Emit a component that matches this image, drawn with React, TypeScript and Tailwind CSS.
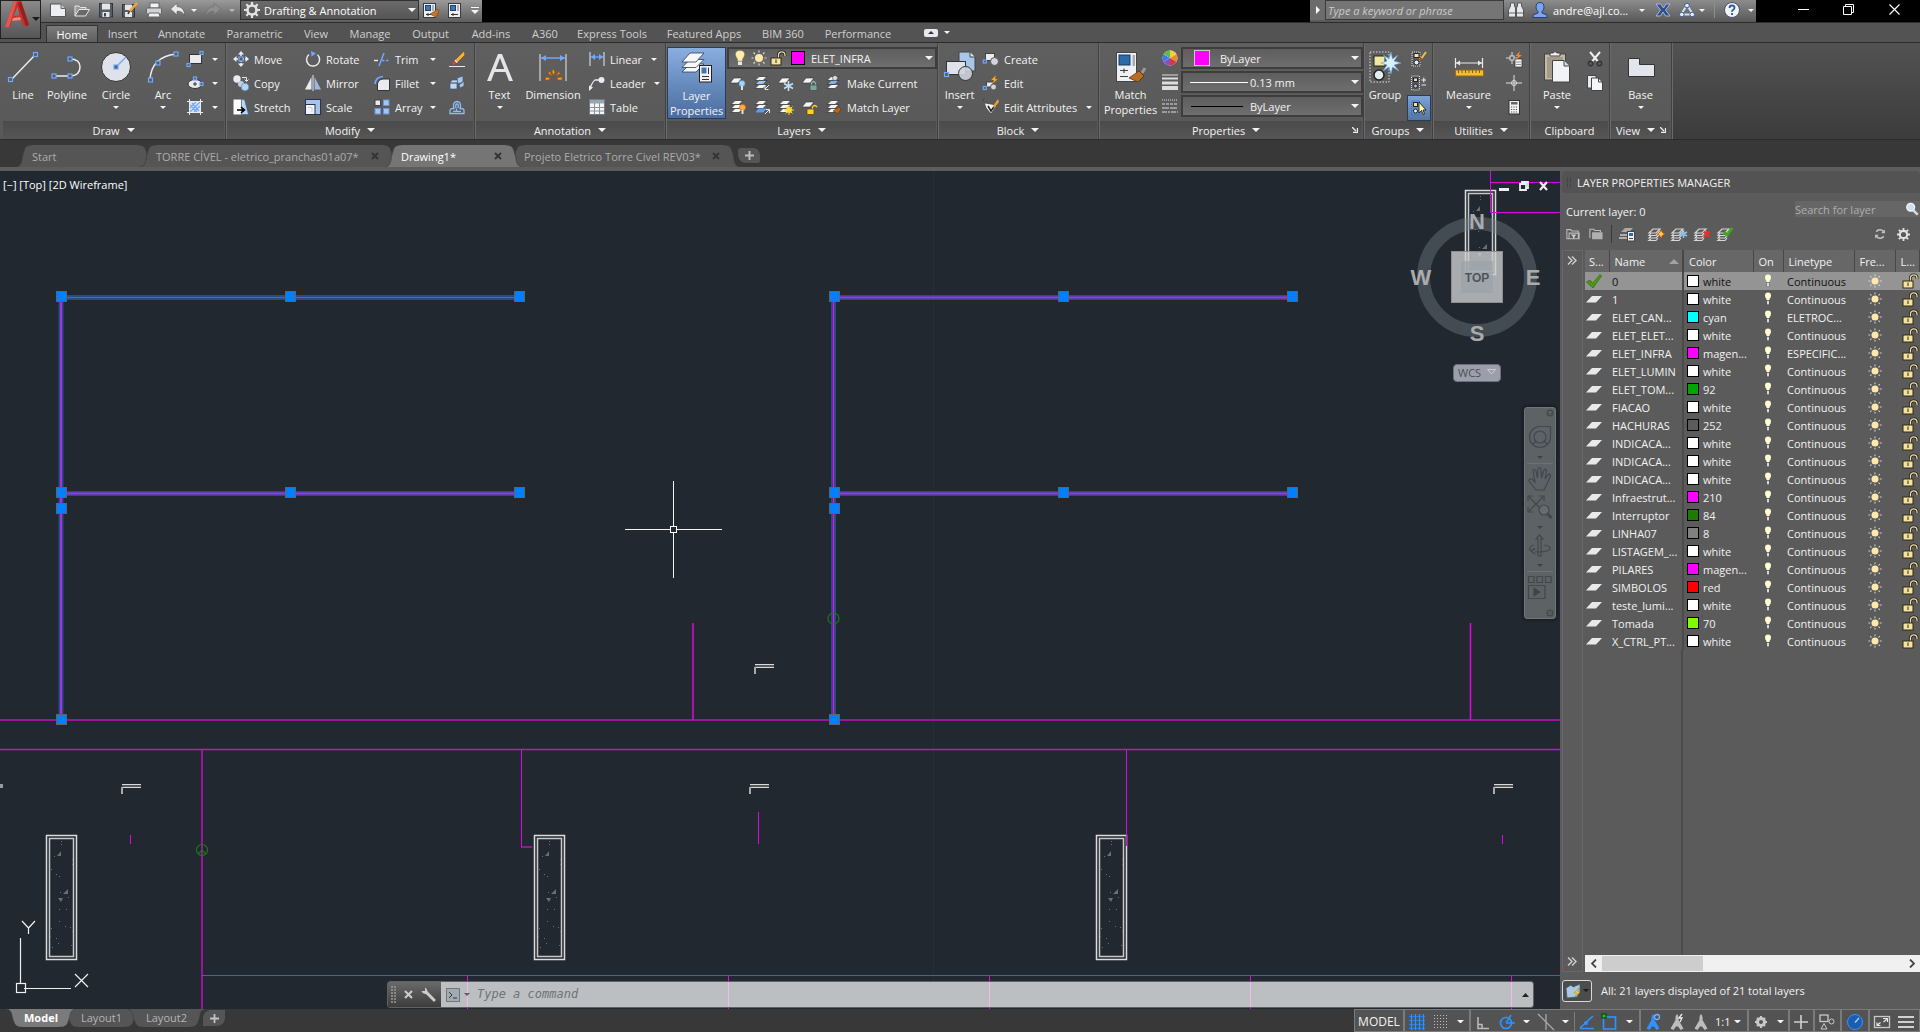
import React from "react";

type IconProps = { name: string; size?: number };

const B = "#6ea8ff";
const L = "#e9ebf0";

const Grip = ({ x, y, s = 3 }: { x: number; y: number; s?: number }) => (
  <rect x={x - s / 2} y={y - s / 2} width={s} height={s} fill="#5b5b5b" stroke={B} strokeWidth="1.2" />
);

const Sheets = ({ fill = "#f4f4f4", mid = "#f4f4f4" }: { fill?: string; mid?: string }) => (
  <g stroke="#2e2e2e" strokeWidth="0.7">
    <path d="M1 13.500 L5 9.500 H13 L9 13.500 Z" fill={fill} />
    <path d="M1 9.500 L5 5.500 H13 L9 9.500 Z" fill={mid} />
    <path d="M1 5.500 L5 1.500 H13 L9 5.500 Z" fill={fill} />
  </g>
);

const OneSheet = () => <path d="M0 8 L4 3 H12 L8 8 Z" fill="#f4f4f4" stroke="#2e2e2e" strokeWidth="0.6" />;

const OutlineSheets = ({ c = "#d8d8d8" }: { c?: string }) => (
  <g stroke={c} strokeWidth="1.2" fill="none">
    <path d="M1 7 L5 3 H12 L8 7 Z" />
    <path d="M3 7 L1 9.500 H8 L12 5" />
    <path d="M3 10 L1 12 H8 L11 9" />
    <path d="M3 13 L1 14.500 H8 L10 12" />
  </g>
);

const Doc = ({ x = 0 }: { x?: number }) => (
  <g>
    <rect x={x + 1.500} y="1.500" width="12" height="14" fill="#eef0f4" stroke="#3a3a3a" />
    <rect x={x + 3.500} y="3.500" width="5" height="5" fill="#3f76b5" stroke="#1e4170" />
    <rect x={x + 10} y="3" width="2" height="6" fill="#a9b2bd" />
    <path d={`M${x + 4} 12.500 H${x + 11} M${x + 6} 11 V14`} stroke="#333" fill="none" />
  </g>
);

const icons16: Record<string, React.ReactNode> = {
  rect: (<><rect x="2.500" y="3.500" width="12" height="9" fill={L} stroke="#333" /><Grip x={1.500} y={14} /><Grip x={14.500} y={2} /></>),
  ellipse: (<><ellipse cx="8" cy="9" rx="7" ry="4.500" fill={L} stroke="#333" /><path d="M6 9 H10 M8 7 V11" stroke="#333" /><Grip x={8} y={3.500} /><Grip x={14.500} y={9} /></>),
  hatch: (<><rect x="3" y="3" width="10" height="10" fill="#dfe6f2" /><path d="M3 9 L9 3 M3 13 L13 3 M7 13 L13 7 M5 4 L12 12 M3 6 L10 13" stroke={B} strokeWidth="1.200" /><path d="M2.500 0 V16 M13.500 0 V16 M0 2.500 H16 M0 13.500 H16" stroke={L} /></>),
  move: (<><path d="M8 0 L11 3.500 H5 Z M8 16 L11 12.500 H5 Z M0 8 L3.500 5 V11 Z M16 8 L12.500 5 V11 Z" fill={L} /><path d="M8 3 V13 M3 8 H13" stroke={L} strokeWidth="1.500" strokeDasharray="2 1" /><Grip x={8} y={8} s={4} /></>),
  copy: (<><circle cx="4" cy="4" r="3.700" fill={L} /><circle cx="8" cy="9" r="3" fill="#b9d2ef" /><circle cx="12" cy="12" r="3.800" fill="#b9d2ef" stroke="#5b86b8" strokeWidth="0.700" /><path d="M9 2.500 H13.500 V6 M11.500 4.500 L13.500 6.500 L15.500 4.500" stroke={L} fill="none" /></>),
  stretch: (<><rect x="0.500" y="0.500" width="8" height="15" fill="#fff" /><path d="M8.500 0.500 H11.500 L15.500 15.500 H8.500 Z" fill="#b8d6f0" stroke="#35608f" strokeWidth="0.600" /><path d="M4 11 H11 M8 8 L11.500 11 L8 14" stroke="#000" strokeWidth="1.600" fill="none" /></>),
  rotate: (<><path d="M4 3.500 A6.500 6.500 0 1 0 12.500 3.800" stroke={L} strokeWidth="1.500" fill="none" /><path d="M6 0 L11 2.500 L6.500 5.500 Z" fill={B} /></>),
  mirror: (<><path d="M6.500 2 V14.500 H0 Z" fill={L} /><path d="M9.500 2 V14.500 H16 Z" fill="#9ab9dc" /><path d="M8 0 V16" stroke={L} /></>),
  scale: (<><rect x="0.500" y="0.500" width="15" height="15" fill="#a8c2ea" stroke="#26354f" /><rect x="0.500" y="5.500" width="9.500" height="10" fill="#f3f4f8" stroke="#26354f" /><path d="M3 8.500 H7 V13" stroke="#ccc" fill="none" /></>),
  trim: (<><path d="M0 9.500 H4" stroke={L} strokeWidth="1.400" /><path d="M5 15 L10 2" stroke={B} strokeWidth="1.500" /><path d="M8 9.500 H16" stroke={B} strokeWidth="1.400" strokeDasharray="2.500 1.500" /></>),
  fillet: (<><path d="M3.500 15.500 V9 Q4 4.500 9 4 H15.500 V15.500 Z" fill={L} stroke="#333" /><path d="M1 9 Q1.500 2 9 1.500" stroke={B} strokeWidth="1.600" fill="none" /></>),
  array: (<><rect x="1" y="1" width="5.500" height="5.500" fill="#e9ebf0" stroke="#444" /><g fill="#a9c4f2" stroke="#6b95d8"><rect x="9.500" y="1" width="5.500" height="5.500" /><rect x="1" y="9.500" width="5.500" height="5.500" /><rect x="9.500" y="9.500" width="5.500" height="5.500" /></g></>),
  erase: (<><path d="M0 15.500 H16" stroke={L} /><path d="M15 0 L16 4 L9 11 L6.500 8.500 Z" fill="#f0b23a" stroke="#6e4410" strokeWidth="0.600" /><path d="M6.500 8.500 L9 11 L7.500 12 L5.500 10 Z" fill="#eee" /><path d="M5.500 10 L7.500 12 L5 14 Q2.500 13.500 3.500 11 Z" fill="#d8472b" /></>),
  explode: (<><path d="M1 8 H8 V14 H1 Z M3 5 H10 L8 8 H1 Z" fill="#c3d7ef" stroke="#3c5878" strokeWidth="0.700" /><path d="M8 3 L14 1 V7 L9 9 Z M10 10 L15 6 V11 L11 13 Z" fill="#a9c8ea" stroke="#3c5878" strokeWidth="0.700" /></>),
  offset: (<path d="M1 14.500 H15 V11.500 Q15 9.500 12 9.500 H11 Q13 3 8 2.500 Q3 3 5 9.500 H4 Q1 9.500 1 11.500 Z M4 12.300 H12 M7.500 9.500 V12 M7 9 Q6 5 8 5 Q10 5 9 9" stroke="#8fbaf5" strokeWidth="1.300" fill="none" />),
  linear: (<><path d="M1 1 V15 M15 1 V15" stroke={L} /><path d="M2 6 H14" stroke={B} strokeWidth="1.300" /><path d="M2 6 L6 3 V9 Z M14 6 L10 3 V9 Z" fill={B} /></>),
  leader: (<><path d="M1 13 Q4 6 6 5 H10" stroke={L} strokeWidth="1.300" fill="none" /><path d="M0 16 L0 10.500 L4 12.500 Z" fill={L} /><circle cx="12.500" cy="5" r="3" fill={L} /></>),
  table: (<><rect x="0.500" y="0.500" width="15" height="15" fill="#f6f6f6" stroke="#6e7a88" /><rect x="1" y="1" width="14" height="3.500" fill="#9aa5b4" /><path d="M1 8.500 H15 M1 12 H15 M5.500 4 V15 M10.500 4 V15" stroke="#8a8f98" /></>),
  layoff: (<><OneSheet /><circle cx="12" cy="8.500" r="3" fill="#a7d3f7" stroke="#5590c4" strokeWidth="0.600" /><rect x="11" y="11" width="2" height="4" fill="#ddd" /></>),
  layiso: (<><Sheets mid="#9cc6f0" /><path d="M15 10 L11 14 M11 11 V14.500 H14.500" stroke="#d8e6f5" fill="none" /></>),
  layfrz: (<><OneSheet /><g stroke="#bfe0fa" strokeWidth="1.600"><path d="M10.500 6 V16 M6 8.500 L15 13.500 M6 13.500 L15 8.500" /></g></>),
  laylck: (<><OneSheet /><path d="M9.500 10 V8 Q11.500 5 13.500 8 V10" fill="none" stroke="#8fb3ac" strokeWidth="1.300" /><rect x="8" y="10" width="7" height="5.500" fill="#7fa29c" stroke="#38504b" strokeWidth="0.700" /></>),
  makecur: (<><Sheets mid="#7fb2ea" /><circle cx="9" cy="3" r="2.500" fill="#ddd" stroke="#444" strokeWidth="0.600" /></>),
  layon: (<><Sheets /><circle cx="12.500" cy="8.500" r="3" fill="#ffb14a" stroke="#d46f10" strokeWidth="0.800" /><rect x="11.500" y="11" width="2" height="4" fill="#ddd" /></>),
  layuniso: (<><Sheets /><path d="M1 13.500 L5 9.500 H13 L9 13.500 Z" fill="#5c9af0" /><path d="M11 15 L15 11 M12 10.500 H15.500 V14" stroke="#e6e6e6" fill="none" /></>),
  laythw: (<><Sheets /><circle cx="11" cy="11" r="3" fill="#ffd83a" /><path d="M11 6 V16 M6 11 H16 M7.500 7.500 L14.500 14.500 M14.500 7.500 L7.500 14.500" stroke="#ffd83a" /></>),
  layulk: (<><OneSheet /><path d="M10.500 11 V8 Q12.500 5 15 8" fill="none" stroke="#ffce2e" strokeWidth="1.300" /><rect x="5" y="10" width="7" height="5.500" fill="#ffce2e" stroke="#54420a" strokeWidth="0.700" /></>),
  match: (<><Sheets /><path d="M13 8 L15 10 L12 15 L7 12 Z" fill="#b8651f" stroke="#5c2f08" strokeWidth="0.600" /></>),
  create: (<><rect x="2.500" y="2.500" width="9" height="7" fill={L} stroke="#444" /><circle cx="11.500" cy="10.500" r="4" fill="#cfd5de" stroke="#555" /><Grip x={1.800} y={10.500} /></>),
  editblk: (<><rect x="3.500" y="7" width="7" height="5" fill={L} stroke="#444" /><circle cx="10.500" cy="12" r="3" fill="#cfd5de" stroke="#555" /><Grip x={1.800} y={13} /><path d="M13 0 L8 5 H11 L9 9 L15 4 H12 Z" fill="#ffb52b" stroke="#9a5a00" strokeWidth="0.400" /></>),
  attr: (<><path d="M0 0 L2 4 L14 6 L8 15 L3 9 Z" fill="#f1f1f1" stroke="#444" strokeWidth="0.800" /><path d="M5 7 L8 12 L15 2" stroke="#222" strokeWidth="1.500" fill="none" /><path d="M15 0 L16 3 L11 9 L10 7 Z" fill="#f0a031" /></>),
  wheel: (<><circle cx="8" cy="8" r="7.500" fill="#fff" /><path d="M8 8 L8 0.500 A7.500 7.500 0 0 1 14.500 4.200 Z" fill="#f1d13b" /><path d="M8 8 L14.500 4.200 A7.500 7.500 0 0 1 14.500 11.800 Z" fill="#e98a34" /><path d="M8 8 L14.500 11.800 A7.500 7.500 0 0 1 8 15.500 Z" fill="#d33b3b" /><path d="M8 8 V15.500 A7.500 7.500 0 0 1 1.500 11.800 Z" fill="#8a4bd0" /><path d="M8 8 L1.500 11.800 A7.500 7.500 0 0 1 1.500 4.200 Z" fill="#3f7be0" /><path d="M8 8 L1.500 4.200 A7.500 7.500 0 0 1 8 0.500 Z" fill="#5ebd4a" /></>),
  gedit: (<><rect x="1" y="1" width="8" height="14" fill="none" stroke="#ddd" strokeDasharray="1 1" /><rect x="3" y="2.500" width="5" height="4" fill="#efe9a0" stroke="#222" /><circle cx="5.500" cy="11.500" r="2.500" fill="#e6f0f2" stroke="#222" /><path d="M15 1 L10 8" stroke="#f0c040" strokeWidth="2" /><path d="M10.500 7 L9 9.500" stroke="#c0392b" strokeWidth="2" /></>),
  gadd: (<><rect x="0.500" y="1" width="8" height="14" fill="none" stroke="#ddd" strokeDasharray="1 1" /><rect x="2.500" y="3" width="4" height="3.500" fill="#ddd" stroke="#222" /><circle cx="4.500" cy="11" r="2" fill="#9cc6f0" stroke="#222" /><path d="M10.500 5 H15 M12.800 2.500 V7.500 M10.500 10 H15" stroke="#eee" /></>),
  gsel: (<><rect x="0.500" y="1" width="8" height="14" fill="none" stroke="#2d6ae0" strokeDasharray="1 1" /><rect x="2.500" y="2.500" width="4" height="4" fill="#efe9a0" stroke="#222" /><circle cx="4.500" cy="11" r="2" fill="#e6f0f2" stroke="#222" /><path d="M8 2 V13 L10.500 10.500 L12 14.500 L13.500 14 L12 10 H15 Z" fill="#fff6a8" stroke="#111" strokeWidth="0.800" /></>),
  qcalcpt: (<><path d="M0 7 H12 M6 1 V13" stroke="#ddd" /><rect x="4" y="5" width="4" height="4" fill="#5b5b5b" stroke="#ddd" /><path d="M14 0 L9.500 5 H12 L10 9 L16 4 H13 Z" fill="#f3892b" /><rect x="9" y="8" width="7" height="8" fill="#f2f2f2" stroke="#333" strokeWidth="0.700" /><path d="M10.500 11 H15 M10.500 13.500 H15" stroke="#333" strokeDasharray="1 1" /></>),
  point: (<><path d="M0 8 H16 M8 0 V16" stroke="#ddd" /><circle cx="8" cy="8" r="2.500" fill="none" stroke="#ddd" /></>),
  calc: (<><rect x="3" y="1.500" width="10.500" height="13.500" fill="#f2f2f2" stroke="#333" /><rect x="5" y="3" width="6.500" height="2.500" fill="#666" /><path d="M5 8 H12 M5 10.500 H12 M5 13 H12" stroke="#555" strokeWidth="1.200" strokeDasharray="1.200 1.200" /></>),
  cut: (<><path d="M3 1 L11 10.500 M13 1 L5 10.500" stroke="#eee" strokeWidth="2" /><circle cx="3.500" cy="12.500" r="2.200" fill="none" stroke="#333" strokeWidth="1.400" /><circle cx="12.500" cy="12.500" r="2.200" fill="none" stroke="#333" strokeWidth="1.400" /></>),
  copyclip: (<><path d="M0.500 0.500 H9 V13 H0.500 Z" fill="#e9ebf0" stroke="#444" /><path d="M4.500 3 H11.500 L15.500 7 V15.500 H4.500 Z" fill="#f5f6f8" stroke="#444" /><path d="M11.500 3 V7 H15.500" fill="none" stroke="#444" /></>),
  new: (<><path d="M0.500 2 H11 L15.500 6.500 V14.500 H0.500 Z" fill="#eceef2" stroke="#555" /><path d="M11 2 V6.500 H15.500" fill="#ccc" stroke="#666" /></>),
  open: (<><path d="M1 14 V4 H5 L6.500 5.500 H12 V8" fill="#9a9a9a" stroke="#e6e6e6" /><path d="M1 14 L5 7.500 H15.500 L11.500 14 Z" fill="#6a6a6a" stroke="#e6e6e6" /></>),
  save: (<><rect x="1.500" y="1.500" width="13" height="13.500" fill="#575c64" stroke="#33373d" /><rect x="4" y="1.500" width="8" height="6" fill="#e3e5e9" /><rect x="4.500" y="10" width="7" height="5" fill="#e3e5e9" /><rect x="6" y="11" width="2" height="3.500" fill="#444" /></>),
  saveas: (<><rect x="0.500" y="2.500" width="12" height="12.500" fill="#575c64" stroke="#33373d" /><rect x="3" y="2.500" width="7" height="5.500" fill="#e3e5e9" /><rect x="3" y="10" width="7" height="5" fill="#e3e5e9" /><path d="M15 1 L7 10" stroke="#f0a838" strokeWidth="2.600" /><path d="M7.500 9 L6 12" stroke="#333" strokeWidth="1.500" /></>),
  print: (<><rect x="4" y="1" width="9" height="5" fill="#f2f2f2" stroke="#666" /><rect x="0.500" y="6" width="15" height="6" rx="1" fill="#cfd2d7" stroke="#666" /><path d="M3 11 H13 L14 15 H2 Z" fill="#f2f2f2" stroke="#666" /></>),
  undo: (<path d="M0.500 7 L7 1 V4.500 Q15 5 14.500 14 Q13 9 7 9.300 V13 Z" fill="#e6e8ec" stroke="#555" strokeWidth="0.600" />),
  redo: (<path d="M15.500 7 L9 1 V4.500 Q1 5 1.500 14 Q3 9 9 9.300 V13 Z" fill="#8f8f8f" stroke="#6d6d6d" strokeWidth="0.600" />),
  gear: (<><circle cx="8" cy="8" r="4.500" fill="none" stroke="#e2e2e2" strokeWidth="2.600" /><path d="M8 0 V3 M8 13 V16 M0 8 H3 M13 8 H16 M2.300 2.300 L4.500 4.500 M11.500 11.500 L13.700 13.700 M13.700 2.300 L11.500 4.500 M2.300 13.700 L4.500 11.500" stroke="#e2e2e2" strokeWidth="2.200" /></>),
  matchdoc: (<><Doc x={-1} /><path d="M15 7 L16 9 L13 15.500 L7 12 Z" fill="#c67427" stroke="#6d3a0a" strokeWidth="0.500" /></>),
  propdoc: (<Doc />),
  binoc: (<g fill="#e6e8ec" stroke="#444" strokeWidth="0.800"><path d="M2.500 1 H6.500 V4 L7.500 6 V15 H0.500 V8 L2.500 4 Z" /><path d="M9.500 1 H13.500 V4 L15.500 8 V15 H8.500 V6 L9.500 4 Z" /><path d="M0.500 11 H7.500 M8.500 11 H15.500" /></g>),
  user: (<g fill="#7da4ee" stroke="#20376e" strokeWidth="0.900"><path d="M8 0.500 Q12 0.500 12 5 Q12 8 10 9.500 V11 L15 13 V15.500 H1 V13 L6 11 V9.500 Q4 8 4 5 Q4 0.500 8 0.500 Z" /></g>),
  exchange: (<path d="M1 2 H5.500 L8.500 6 L11 2 H15 L10.500 8 L15 14 H10.500 L8 10 L5.500 14 H1 L5.500 8 Z" fill="#2f4f8e" stroke="#a9c0ea" strokeWidth="0.900" />),
  a360: (<><path d="M8 3 L14 12.500 H2 Z" fill="none" stroke="#cfe0f7" strokeWidth="2" /><circle cx="8" cy="3.500" r="2.300" fill="#e6eefb" stroke="#3d5c96" /><circle cx="2.800" cy="12.500" r="2.300" fill="#e6eefb" stroke="#3d5c96" /><circle cx="13.200" cy="12.500" r="2.300" fill="#e6eefb" stroke="#3d5c96" /></>),
  help: (<><circle cx="8" cy="8" r="7.500" fill="#f2f4f8" stroke="#4a5468" /><path d="M5.500 6 Q5.500 3.500 8 3.500 Q10.500 3.500 10.500 5.800 Q10.500 7 9 8 Q8 8.600 8 9.800 M8 11 V13" stroke="#2a5cab" strokeWidth="1.900" fill="none" /></>),
  bulb: (<><path d="M8 0.500 Q13 0.500 12.500 5 Q12 7.500 10.500 9 V11 H5.500 V9 Q4 7.500 3.500 5 Q3 0.500 8 0.500 Z" fill="#ffeeb0" stroke="#8a7a40" strokeWidth="0.500" /><rect x="6" y="11.500" width="4" height="3.500" fill="#e8e8e8" /></>),
  sun: (<><circle cx="8" cy="8" r="4" fill="#ffe9a8" /><path d="M8 0.500 V2.500 M8 13.500 V15.500 M0.500 8 H2.500 M13.500 8 H15.500 M2.500 2.500 L4 4 M12 12 L13.500 13.500 M13.500 2.500 L12 4 M2.500 13.500 L4 12" stroke="#d9d9d9" strokeWidth="1.200" /></>),
  unlock: (<><path d="M8.500 8 V5 Q8.500 1.800 11.700 1.800 Q15 1.800 15 5 V6" fill="none" stroke="#1d1d1d" strokeWidth="2.800" /><path d="M8.500 8 V5 Q8.500 1.800 11.700 1.800 Q15 1.800 15 5 V6" fill="none" stroke="#f0dc9c" strokeWidth="1.300" /><rect x="1" y="8" width="10" height="7" fill="#f3e2a2" stroke="#33290d" /><path d="M6 9.500 V13" stroke="#33290d" /></>),
  check: (<path d="M0.500 9 L4 7 L6.500 10.500 L14 1.500 L15.500 3 L7 15 Z" fill="#4c9a12" stroke="#2d6607" strokeWidth="0.700" />),
  sheet: (<path d="M0 11.500 L6 5 H16 L10 11.500 Z" fill="#e9e9ea" />),
  tbfilter: (<><path d="M1 13.500 V3 H5.500 L6.500 4.500 H14 V13.500 Z M3.500 7 H15 V13.500 H3.500 Z" fill="none" stroke="#bdbdbd" strokeWidth="1.200" /><path d="M5.500 8.500 H12 L9.700 11 V13 H8 V11 Z" fill="#cfcfcf" /></>),
  tbgroup: (<><path d="M1 12.500 V2.500 H5.500 L6.500 4 H13 V6" fill="none" stroke="#bdbdbd" strokeWidth="1.200" /><rect x="3.500" y="6" width="12" height="8" fill="#b0b0b0" /></>),
  tbstates: (<><path d="M2 6 L6 2 H14 L10 6 Z" fill="#aaa" /><path d="M1 9 H8 M0 12 H8" stroke="#c9c9c9" strokeWidth="1.600" /><rect x="8.500" y="5.500" width="7" height="9.500" fill="#f1f1f1" stroke="#444" /><rect x="10" y="7" width="4" height="3" fill="#2e67b3" /><path d="M10 12.500 H14" stroke="#444" /></>),
  tbnew: (<><OutlineSheets /><path d="M13 4 L14.300 6.500 L16.500 8 L14.300 9.500 L13 12 L11.700 9.500 L9.500 8 L11.700 6.500 Z" fill="#ffd23a" stroke="#e04a1f" strokeWidth="0.800" /></>),
  tbfrz: (<><OutlineSheets /><path d="M12.500 4 V12 M9 6 L16 10 M9 10 L16 6" stroke="#8fc3e2" strokeWidth="1.600" /></>),
  tbdel: (<><OutlineSheets /><path d="M10 5.500 L15.500 11 M15.500 5.500 L10 11" stroke="#ee2d24" strokeWidth="2.400" /></>),
  tbset: (<><OutlineSheets /><path d="M7 6 L10 9 L15.500 2" stroke="#3faa14" strokeWidth="2.800" fill="none" /></>),
  refresh: (<><path d="M13.500 6 A6 6 0 0 0 3 5 M2.500 10 A6 6 0 0 0 13 11" stroke="#c4c4c4" strokeWidth="2" fill="none" /><path d="M14.500 2 V7 H9.500 Z M1.500 14 V9 H6.500 Z" fill="#c4c4c4" /></>),
  search: (<><path d="M9.500 9.500 L14.500 14.500" stroke="#d8d8d8" strokeWidth="3" /><circle cx="6.500" cy="6" r="4.500" fill="#cddff2" stroke="#f4f4f4" strokeWidth="1.500" /></>),
};

const Icon = ({ name, size = 16 }: IconProps) => (
  <svg width={size} height={size} viewBox="0 0 16 16" className="shrink-0 overflow-visible" aria-hidden="true">
    {icons16[name]}
  </svg>
);

const big: Record<string, React.ReactNode> = {
  line: (<><path d="M4 29 L28 4" stroke={L} strokeWidth="1.500" /><Grip x={3.500} y={28.500} s={4} /><Grip x={28.500} y={3.500} s={4} /></>),
  polyline: (<><path d="M3 25 H20 Q29 24 29 16 Q29 8 19 8" stroke={L} strokeWidth="1.500" fill="none" /><Grip x={3} y={25} s={4} /><Grip x={19} y={25} s={4} /><Grip x={19} y={8} s={4} /></>),
  circle: (<><circle cx="16" cy="16" r="14.500" fill="#dfe2ea" stroke="#2f2f2f" /><path d="M16 16 L26 6" stroke={B} strokeWidth="1.500" /><Grip x={16} y={16} s={4} /></>),
  arc: (<><path d="M3 29 Q4 6 29 3" stroke={L} strokeWidth="1.500" fill="none" /><Grip x={3.500} y={29} s={4} /><Grip x={11} y={12} s={4} /><Grip x={29} y={3} s={4} /></>),
  text: (<path d="M3 30 L14 3 H18 L29 30 H25 L21.500 21 H10.500 L7 30 Z M11.800 18 H20.200 L16 7 Z" fill="#e3e4e8" />),
  dimension: (<><path d="M3 3 V30 M29 3 V30" stroke={L} /><path d="M4 7 H28" stroke={B} strokeWidth="1.500" /><path d="M4 7 L9 4 V10 Z M28 7 L23 4 V10 Z" fill={B} /><g fill="#f2a31f" stroke="#b4530a" strokeWidth="0.700"><path d="M8 29 L9 26 L13 27 L12 29 Z M11 22 L13 20.500 L15 25 Z M16 18 L18 21 L16.500 24 L15 21 Z M22 20.500 L23 22.500 L19 25 Z M20 27 L25 26 L25 29 L21 29 Z" /></g></>),
  layerprops: (<><g fill="#f7f7f7" stroke="#2a3d5c" strokeWidth="0.800"><path d="M1 20 L9 12 H23 L15 20 Z" /><path d="M1 15.500 L9 7.500 H23 L15 15.500 Z" /><path d="M1 10 L9 1 H23 L15 10 Z" /></g><rect x="18.500" y="13.500" width="12" height="16.500" fill="#f4f4f4" stroke="#222" /><rect x="20.500" y="15.500" width="5" height="6" fill="#3f76b5" /><path d="M27.500 15.500 V22 M21 24.500 H28 M21 27.500 H28" stroke="#333" /></>),
  insert: (<><path d="M15 1 H26 L31 6 V20 H15 Z" fill="#a6c6ea" stroke="#444" /><path d="M26 1 V6 H31" fill="#dbe9f7" stroke="#444" /><rect x="2.500" y="10.500" width="19" height="13" fill="#dfe2ea" stroke="#333" /><circle cx="21.500" cy="22.500" r="7" fill="#ccd2da" fillOpacity="0.900" stroke="#333" /><Grip x={2.500} y={23.500} s={4} /></>),
  matchprops: (<><rect x="1.500" y="1.500" width="20" height="29" fill="#eef0f4" stroke="#444" /><rect x="4" y="4" width="11" height="10" fill="#2c6aa8" stroke="#173a63" /><rect x="17.500" y="4" width="2.500" height="11" fill="#a2adba" /><path d="M5 19.500 H13 M9 17.500 V22 M5 25.500 H13" stroke="#444" strokeWidth="1.200" /><path d="M30 17 L27 22" stroke="#999" strokeWidth="3" /><path d="M24 20 L29 25 L23 31 L14 27 Z" fill="#b96c28" stroke="#5b300a" strokeWidth="0.800" /></>),
  group: (<><rect x="1" y="1" width="19" height="30" fill="none" stroke="#ddd" strokeDasharray="1.500 1.500" /><rect x="5" y="5" width="11" height="10" fill="#efe9a0" stroke="#222" /><circle cx="10" cy="24" r="5" fill="#e1edf0" stroke="#222" strokeWidth="1.500" /><path d="M22 1 L23.500 8 L29 4 L25 10 L32 12 L25 14 L30 20 L23.500 16 L22 23 L20 16 L14 20 L18 14 L12 12 L18 10 L14.500 4 L20 8 Z" fill="#d9f0ff" stroke="#5aa0e0" strokeWidth="0.600" /></>),
  measure: (<><path d="M2.500 7 V17 M29.500 7 V17 M3 12 H29" stroke={L} strokeWidth="1.200" /><path d="M3 12 L7 9.500 V14.500 Z M29 12 L25 9.500 V14.500 Z" fill={L} /><rect x="2.500" y="19" width="28" height="6" fill="#f2bf33" stroke="#9a6a10" /><path d="M5.500 19 V22 M9 19 V22 M12.500 19 V22 M16 19 V22 M19.500 19 V22 M23 19 V22 M26.500 19 V22" stroke="#8a5c0a" /></>),
  paste: (<><rect x="3.500" y="3" width="21" height="26" fill="#c5b9a8" stroke="#4d4438" /><rect x="6" y="6" width="16" height="21" fill="#a59a8a" /><path d="M9 5 V2 H12 Q14 -1 16 2 H19 V5 Z" fill="#f2f2f2" stroke="#444" /><path d="M11.500 9.500 H23 L28.500 15 V31 H11.500 Z" fill="#f1f3f7" stroke="#444" /><path d="M23 9.500 V15 H28.500" fill="#d5dae2" stroke="#444" /></>),
  base: (<path d="M3.500 7.500 H14.500 V13.500 H29.500 V25.500 H3.500 Z" fill="#e2e5ec" stroke="#333" />),
};

const Caret = ({ w = 8, dark = false }: { w?: number; dark?: boolean }) => (
  <svg width={w} height={w / 2} viewBox="0 0 8 4" className="shrink-0" aria-hidden="true">
    <path d="M0 0 H8 L4 4 Z" fill={dark ? "#1b1b1b" : "#f4f4f4"} />
  </svg>
);

const BigBtn = ({ icon, label, caret, className }: { icon: string; label: string; caret?: boolean; className: string }) => (
  <button className={`flex shrink-0 flex-col items-center pt-1 leading-[15px] ${className}`}>
    <svg width="32" height="32" viewBox="0 0 32 32" className="mb-1 shrink-0 overflow-visible" aria-hidden="true">
      {big[icon]}
    </svg>
    <span className="text-center whitespace-pre">{label}</span>
    {caret && <span className="pt-1"><Caret w={6} /></span>}
  </button>
);

const Small = ({ icon, label, caret, spread }: { icon: string; label?: string; caret?: boolean; spread?: boolean }) => (
  <button aria-label={label ?? icon} className="flex h-6 items-center gap-[5px] whitespace-nowrap">
    <Icon name={icon} />
    {label && <span>{label}</span>}
    {caret && <span className={spread ? "ml-auto" : "ml-1"}><Caret w={6} /></span>}
  </button>
);

const Col = ({ className = "", children }: { className?: string; children: React.ReactNode }) => (
  <div className={`flex shrink-0 flex-col ${className}`}>{children}</div>
);

const Panel = ({ title, className, caret = true, launcher, children }: { title: string; className: string; caret?: boolean; launcher?: boolean; children: React.ReactNode }) => (
  <section className={`flex shrink-0 flex-col border-r border-[#414141] shadow-[1px_0_0_#6a6a6a] ${className}`}>
    <div className="flex h-[78px] pt-1">{children}</div>
    <div className="mx-px flex h-[18px] items-center bg-gradient-to-b from-[#4a4a4a] to-[#565656] px-1">
      <button className="flex flex-1 items-center justify-center gap-[7px]">
        {title}
        {caret && <Caret />}
      </button>
      {launcher && (
        <svg width="6" height="6" viewBox="0 0 6 6" className="ml-1" aria-hidden="true"><path d="M0 0 L4 4 M5.500 1 V5.500 H1" stroke="#eee" strokeWidth="1.300" fill="none" /></svg>
      )}
    </div>
  </section>
);

const combo = "relative flex h-[22px] items-center border-2 border-[#3d3d3d] bg-gradient-to-b from-[#5e5e5e] to-[#6e6e6e]";
const ComboCaret = () => <span className="pointer-events-none absolute right-[2px] flex"><Caret /></span>;

const Ribbon = () => (
  <div className="flex h-[98px] border-t border-b border-[#2c2c2c] bg-gradient-to-b from-[#525252] to-[#3c3c3c] text-[#f3f3f3] shadow-[0_2px_0_#7d7d7d]">
    <div className="flex bg-gradient-to-b from-[#5f5f5f] to-[#585858] pl-[2px]">
      <Panel title="Draw" className="w-[224px]">
        <BigBtn icon="line" label="Line" className="w-[42px]" />
        <BigBtn icon="polyline" label="Polyline" className="w-[46px]" />
        <BigBtn icon="circle" label="Circle" caret className="w-[52px]" />
        <BigBtn icon="arc" label="Arc" caret className="w-[42px]" />
        <Col className="pl-[3px]">
          <Small icon="rect" caret />
          <Small icon="ellipse" caret />
          <Small icon="hatch" caret />
        </Col>
      </Panel>
      <Panel title="Modify" className="w-[249px]">
        <Col className="w-[72px] pl-[7px]">
          <Small icon="move" label="Move" />
          <Small icon="copy" label="Copy" />
          <Small icon="stretch" label="Stretch" />
        </Col>
        <Col className="w-[75px] pl-[7px]">
          <Small icon="rotate" label="Rotate" />
          <Small icon="mirror" label="Mirror" />
          <Small icon="scale" label="Scale" />
        </Col>
        <Col className="w-[63px] pl-px">
          <Small icon="trim" label="Trim" caret spread />
          <Small icon="fillet" label="Fillet" caret spread />
          <Small icon="array" label="Array" caret spread />
        </Col>
        <Col className="pl-[13px]">
          <Small icon="erase" />
          <Small icon="explode" />
          <Small icon="offset" />
        </Col>
      </Panel>
      <Panel title="Annotation" className="w-[191px]">
        <BigBtn icon="text" label="Text" caret className="w-[49px]" />
        <BigBtn icon="dimension" label="Dimension" className="w-[58px]" />
        <Col className="pl-[7px]">
          <Small icon="linear" label="Linear" caret />
          <Small icon="leader" label="Leader" caret />
          <Small icon="table" label="Table" />
        </Col>
      </Panel>
      <Panel title="Layers" className="w-[272px]">
        <div className="ml-px flex h-[72px] w-[59px] shrink-0 justify-center border border-[#2a3c5c] bg-gradient-to-b from-[#8aaee0] to-[#4a6c9f]">
          <BigBtn icon="layerprops" label={"Layer\nProperties"} className="w-[58px]" />
        </div>
        <div className="ml-px flex flex-1 flex-col">
          <div className={`${combo} gap-[3px] pl-[3px]`}>
            <Icon name="bulb" />
            <Icon name="sun" />
            <Icon name="unlock" />
            <span className="mx-[2px] h-[14px] w-[14px] shrink-0 border border-black bg-[#ff00ff]" />
            <select aria-label="Layer" className="min-w-0 flex-1 appearance-none pl-px outline-none"><option>ELET_INFRA</option></select>
            <ComboCaret />
          </div>
          <div className="flex h-[26px] items-center gap-2 pt-[2px] pl-[3px]">
            <Small icon="layoff" /><Small icon="layiso" /><Small icon="layfrz" /><Small icon="laylck" />
            <Small icon="makecur" label="Make Current" />
          </div>
          <div className="flex h-6 items-center gap-2 pl-[3px]">
            <Small icon="layon" /><Small icon="layuniso" /><Small icon="laythw" /><Small icon="layulk" />
            <Small icon="match" label="Match Layer" />
          </div>
        </div>
      </Panel>
      <Panel title="Block" className="w-[161px]">
        <BigBtn icon="insert" label="Insert" caret className="w-[43px]" />
        <Col className="pl-[2px]">
          <Small icon="create" label="Create" />
          <Small icon="editblk" label="Edit" />
          <Small icon="attr" label="Edit Attributes" caret />
        </Col>
      </Panel>
      <Panel title="Properties" launcher className="w-[265px]">
        <BigBtn icon="matchprops" label={"Match\nProperties"} className="w-[63px]" />
        <div className="grid flex-1 grid-cols-[19px_1fr] content-start gap-y-[2px]">
          <div className="flex items-center"><Icon name="wheel" /></div>
          <div className={`${combo} gap-2 pl-[11px]`}>
            <span className="h-4 w-4 shrink-0 border border-[#ccc] bg-[#ff00ff]" />
            <select aria-label="Object color" className="min-w-0 flex-1 appearance-none pl-[2px] outline-none"><option>ByLayer</option></select>
            <ComboCaret />
          </div>
          <div className="flex items-center">
            <svg width="16" height="16" aria-hidden="true"><path d="M0 1 H16" stroke="#ddd" strokeWidth="1" /><path d="M0 4.500 H16" stroke="#ddd" strokeWidth="2" /><path d="M0 9 H16" stroke="#ddd" strokeWidth="3" /><path d="M0 14 H16" stroke="#ddd" strokeWidth="4" /></svg>
          </div>
          <div className={`${combo} gap-[2px] pl-[7px]`}>
            <span className="h-px w-[58px] shrink-0 bg-white" />
            <select aria-label="Lineweight" className="min-w-0 flex-1 appearance-none outline-none"><option>0.13 mm</option></select>
            <ComboCaret />
          </div>
          <div className="flex items-center">
            <svg width="16" height="16" aria-hidden="true"><path d="M0 2 H16" stroke="#ddd" strokeDasharray="1 1" /><path d="M0 6 H16" stroke="#ddd" strokeDasharray="3 1" /><path d="M0 10 H16" stroke="#ddd" strokeDasharray="7 1" /><path d="M0 14 H16" stroke="#ddd" strokeDasharray="5 1 2 1" /></svg>
          </div>
          <div className={`${combo} gap-[7px] pl-[8px]`}>
            <span className="h-px w-[52px] shrink-0 bg-black" />
            <select aria-label="Linetype" className="min-w-0 flex-1 appearance-none outline-none"><option>ByLayer</option></select>
            <ComboCaret />
          </div>
        </div>
      </Panel>
      <Panel title="Groups" className="w-[69px]">
        <BigBtn icon="group" label="Group" className="w-[42px]" />
        <Col className="w-[26px] items-center">
          <Small icon="gedit" />
          <Small icon="gadd" />
          <span className="flex w-6 justify-center border border-[#2a3c5c] bg-gradient-to-b from-[#7ea3d8] to-[#54779f]"><Small icon="gsel" /></span>
        </Col>
      </Panel>
      <Panel title="Utilities" className="w-[97px]">
        <BigBtn icon="measure" label="Measure" caret className="w-[71px]" />
        <Col className="pl-[2px]">
          <Small icon="qcalcpt" />
          <Small icon="point" />
          <Small icon="calc" />
        </Col>
      </Panel>
      <Panel title="Clipboard" caret={false} className="w-[80px]">
        <BigBtn icon="paste" label="Paste" caret className="w-[54px]" />
        <Col className="pl-[3px]">
          <Small icon="cut" />
          <Small icon="copyclip" />
        </Col>
      </Panel>
      <Panel title="View" launcher className="w-[62px]">
        <BigBtn icon="base" label="Base" caret className="w-[61px]" />
      </Panel>
    </div>
  </div>
);

const TitleBar = () => (
  <header className="flex h-[22px] items-stretch bg-black text-white">
    <div className="flex w-[482px] items-center bg-gradient-to-b from-[#9a9a9a] to-[#5f5f5f] pb-[2px] pl-[50px]">
      <div className="flex items-center gap-2">
        {["new", "open", "save", "saveas", "print", "undo"].map((n) => (
          <button key={n} aria-label={n}><Icon name={n} /></button>
        ))}
      </div>
      <span className="ml-[5px]"><Caret w={6} /></span>
      <button aria-label="redo" className="ml-2"><Icon name="redo" /></button>
      <span className="ml-2 opacity-50"><Caret w={6} /></span>
      <div className="relative ml-[5px] flex h-5 w-[179px] items-center gap-1 border border-[#303030] bg-gradient-to-b from-[#6b6b6b] to-[#555] pl-[3px]">
        <Icon name="gear" />
        <select aria-label="Workspace" className="min-w-0 flex-1 appearance-none outline-none"><option>Drafting &amp; Annotation</option></select>
        <ComboCaret />
      </div>
      <div className="ml-1 flex items-center gap-2">
        <button aria-label="match properties"><Icon name="matchdoc" /></button>
        <button aria-label="properties"><Icon name="propdoc" /></button>
      </div>
      <button aria-label="customize" className="ml-2 flex flex-col gap-[2px]"><span className="h-px w-2 bg-white" /><Caret /></button>
    </div>
    <div className="flex-1" />
    <div className="flex w-[446px] items-center bg-gradient-to-b from-[#8c8c8c] to-[#585858] pb-[2px]">
      <button aria-label="collapse search" className="flex h-full w-[15px] items-center justify-center bg-[#6c6c6c]">
        <svg width="4" height="8"><path d="M0 0 L4 4 L0 8 Z" fill="#fff" /></svg>
      </button>
      <input aria-label="Search" placeholder="Type a keyword or phrase" className="h-5 w-[179px] border border-[#3b3b3b] bg-[#757575] px-[2px] text-[11px] italic outline-none placeholder:text-[#cacaca]" />
      <button aria-label="find" className="ml-1"><Icon name="binoc" /></button>
      <button className="ml-2 flex items-center gap-[5px]"><Icon name="user" /><span className="w-[81px] text-left whitespace-nowrap">andre@ajl.co...</span><Caret w={6} /></button>
      <button aria-label="exchange" className="ml-[10px]"><Icon name="exchange" /></button>
      <button aria-label="a360" className="ml-2 flex items-center gap-1"><Icon name="a360" /><Caret w={6} /></button>
      <span className="mx-[9px] h-4 w-px bg-[#8d8d8d]" />
      <button aria-label="help" className="flex items-center gap-2"><Icon name="help" /><Caret w={6} /></button>
    </div>
    <div className="flex w-[164px] items-center pb-[3px] pl-[42px]">
      <button aria-label="minimize" className="flex w-[45px]"><span className="h-px w-[11px] bg-white" /></button>
      <button aria-label="restore" className="w-[46px]"><svg width="11" height="11"><path d="M0.500 2.500 H8.500 V10.500 H0.500 Z M2.500 2.500 V0.500 H10.500 V8.500 H8.500" fill="none" stroke="#fff" /></svg></button>
      <button aria-label="close"><svg width="11" height="11"><path d="M0.500 0.500 L10.500 10.500 M10.500 0.500 L0.500 10.500" stroke="#fff" strokeWidth="1.200" /></svg></button>
    </div>
  </header>
);

const ribbonTabs: [string, string][] = [
  ["Insert", "w-[49px]"], ["Annotate", "w-[69px]"], ["Parametric", "w-[77px]"], ["View", "w-[46px]"],
  ["Manage", "w-[62px]"], ["Output", "w-[59px]"], ["Add-ins", "w-[62px]"], ["A360", "w-[46px]"],
  ["Express Tools", "w-[88px]"], ["Featured Apps", "w-[96px]"], ["BIM 360", "w-[62px]"], ["Performance", "w-[88px]"],
];

const RibbonTabs = () => (
  <nav className="flex h-5 items-end border-t border-[#2c2c2c] bg-[#535353] pl-[46px] text-[#cfcfcf]">
    <button className="h-[17px] w-[52px] border border-b-0 border-[#333] bg-gradient-to-b from-[#7b7b7b] to-[#5f5f5f] leading-[13px] text-white">Home</button>
    {ribbonTabs.map(([t, w]) => (
      <button key={t} className={`${w} h-[17px] text-center leading-[14px] whitespace-nowrap`}>{t}</button>
    ))}
    <button aria-label="minimize ribbon" className="ml-[22px] flex h-[17px] items-center gap-[6px] pb-[2px]">
      <span className="flex h-2 w-[14px] items-center justify-center rounded-[2px] bg-[#e8e8ee]"><svg width="6" height="3"><path d="M0 3 H6 L3 0 Z" fill="#333" /></svg></span>
      <Caret w={6} />
    </button>
  </nav>
);

const TabEnd = ({ flip, fill, up }: { flip?: boolean; fill: string; up?: boolean }) => (
  <svg width="16" height="22" viewBox="0 0 16 22" preserveAspectRatio="none" className={`h-full shrink-0 ${flip ? "-scale-x-100" : ""} ${up ? "-scale-y-100" : ""}`} aria-hidden="true">
    <path d="M0 22 C7 21 5 14 8 6 C9 2 11 0 16 0 V22 Z" fill={fill} />
    <path d="M0 22 C7 21 5 14 8 6 C9 2 11 0 16 0" fill="none" stroke="#3d3d3d" strokeOpacity="0.700" />
  </svg>
);

const FileTab = ({ label, active, closable = true, className }: { label: string; active?: boolean; closable?: boolean; className: string }) => (
  <div className={`relative -mr-[14px] flex h-[22px] ${active ? "z-10 text-white" : "text-[#acacac]"} ${className}`}>
    <TabEnd fill={active ? "#757575" : "#555555"} />
    <div className={`flex flex-1 items-center justify-between ${active ? "bg-[#757575]" : "bg-[#555555]"}`}>
      <button className="whitespace-nowrap">{label}</button>
      {closable && (
        <button aria-label={`close ${label}`} className="mr-1"><svg width="8" height="8"><path d="M1 1 L7 7 M7 1 L1 7" stroke="#333" strokeWidth="1.800" /></svg></button>
      )}
    </div>
    <TabEnd flip fill={active ? "#757575" : "#555555"} />
  </div>
);

const FileTabs = () => (
  <div className="flex h-[27px] items-end bg-[#383838] pl-[16px]">
    <FileTab label="Start" closable={false} className="w-[138px]" />
    <FileTab label="TORRE CÍVEL - eletrico_pranchas01a07*" className="w-[259px]" />
    <FileTab label="Drawing1*" active className="w-[137px]" />
    <FileTab label="Projeto Eletrico Torre Civel REV03*" className="w-[232px]" />
    <button aria-label="new tab" className="mb-1 ml-3 flex h-[15px] w-[22px] items-center justify-center rounded-tl-[3px] rounded-tr-[7px] rounded-br-[2px] rounded-bl-[8px] bg-[#555]">
      <svg width="9" height="9"><path d="M4.500 0 V9 M0 4.500 H9" stroke="#bbb" strokeWidth="2" /></svg>
    </button>
  </div>
);

const Pillar = ({ x, y, h }: { x: number; y: number; h: number }) => (
  <g>
    <rect x={x + 0.500} y={y + 0.500} width="30" height={h - 1} fill="#212830" stroke="#dcdcdc" strokeWidth="1.500" />
    <rect x={x + 3.500} y={y + 3.500} width="24" height={h - 7} fill="none" stroke="#c8c8c8" strokeWidth="1.500" />
    <g fill="#6a6f73">
      <path d={`M${x + 15} ${y + 16} v5 h-4 Z M${x + 22} ${y + 54} v5 h-5 Z M${x + 12} ${y + 63} h5 l-2 4 Z`} />
      {[[15, 6], [15, 9], [8, 21], [26, 24], [26, 29], [5, 34], [10, 39], [13, 41], [14, 57], [22, 62], [13, 74], [20, 74]].filter(([, b]) => b < h - 6).map(([a, b]) => (
        <rect key={`${a}-${b}`} x={x + a} y={y + b} width="1" height="1" />
      ))}
      {h > 110 && [[13, 86], [19, 91], [24, 92], [5, 93], [26, 96], [10, 103], [4, 101], [12, 108], [25, 110], [6, 112]].map(([a, b]) => (
        <rect key={`${a}-${b}`} x={x + a} y={y + b} width="1" height="1" />
      ))}
    </g>
  </g>
);

const Corner = ({ x, y }: { x: number; y: number }) => (
  <g>
    <rect x={x} y={y} width="19" height="4" fill="#55595e" />
    <path d={`M${x} ${y + 0.500} h19 M${x} ${y + 3.500} h19`} stroke="#d8d8d8" fill="none" />
    <path d={`M${x} ${y + 3} v7`} stroke="#a8a8a8" strokeWidth="2" />
  </g>
);

const grips = [
  [61, 297], [290, 297], [519, 297], [61, 493], [290, 493], [519, 493], [61, 509], [61, 720],
  [834, 297], [1063, 297], [1292, 297], [834, 493], [1063, 493], [1292, 493], [834, 509], [834, 720],
];
const dimmed = "M61 493.500 H519 M61 297 V720 M833 297.500 H1292 M833 493.500 H1292";
const bright = "M61 297.500 H519 M833.500 297 V720";

const Drawing = () => (
  <svg className="absolute inset-0" width="1560" height="838" viewBox="0 171 1560 838" role="img" aria-label="Model space drawing">
    <path d="M933.500 171 V1009" stroke="#272e38" />
    <g stroke="#95169c" strokeWidth="2" fill="none">
      <path d="M0 720 H1560 M202 750 V1009 M521 847 H532" />
    </g>
    <path d="M0 749.500 H1560" stroke="#b81abd" strokeWidth="1.500" />
    <g stroke="#dc0adc" fill="none">
      <path d="M202 975.500 H1560 M521.500 750 V847 M130.500 835 V844 M758.500 812 V844 M1502.500 835 V844" />
      <path d="M467.500 976 V1009 M728.500 976 V1009 M989.500 976 V1009 M1250.500 976 V1009 M1511.500 976 V1009" />
      <path d="M693 623 V720 M1470.500 623 V720" strokeWidth="1.500" />
    </g>
    <path d={dimmed + bright} stroke="#294c85" strokeWidth="5" fill="none" />
    <path d={dimmed} stroke="#a52ee8" strokeWidth="2" fill="none" />
    <path d={bright} stroke="#ff00ff" strokeWidth="1" fill="none" />
    <g fill="none" stroke="#1d7a12" strokeWidth="1.200">
      <circle cx="833.500" cy="618.500" r="5.500" />
      <circle cx="202" cy="850" r="5.500" />
      <path d="M198 854 L202 850 L206 854" />
    </g>
    {grips.map(([x, y]) => (
      <rect key={`${x}-${y}`} x={x - 4.500} y={y - 5.500} width="10" height="10" fill="#0080ff" stroke="#606468" />
    ))}
    <Corner x={755} y={664} />
    <Corner x={122} y={784} />
    <Corner x={750} y={784} />
    <Corner x={1494} y={784} />
    <rect x="0" y="784" width="3" height="4" fill="#999" />
    <Pillar x={46} y={835} h={125} />
    <Pillar x={534} y={835} h={125} />
    <Pillar x={1096} y={835} h={125} />
    <path d="M1126.500 750 V846" stroke="#dc0adc" />
    <Pillar x={1465} y={190} h={85} />
    <path d="M1490.500 171 V212.500 H1560 M1490.500 182.500 H1560" stroke="#dc0adc" fill="none" />
    <path d="M673.500 481 V578 M625 529.500 H722" stroke="#f2f2f2" />
    <rect x="670.500" y="526.500" width="6" height="6" fill="#212830" stroke="#fff" />
    <g stroke="#f0f0f0" fill="none" strokeWidth="1.200">
      <path d="M20.500 938 V984 M24 988.500 H71" />
      <rect x="16.500" y="983.500" width="9" height="9" />
      <path d="M22 921 L28.500 928 L35 921 M28.500 928 V934 M75 974 L88 987 M88 974 L75 987" />
    </g>
    <circle cx="1477" cy="277" r="53.500" fill="none" stroke="#7a828a" strokeOpacity="0.400" strokeWidth="13" />
    <rect x="1451.500" y="251.500" width="51" height="51" fill="#cccdce" fillOpacity="0.800" stroke="#8f8f8f" />
    <rect x="1461" y="261" width="32" height="32" fill="#9aa3aa" fillOpacity="0.700" />
    <g fontFamily="'Liberation Sans', sans-serif" fontWeight="700" textAnchor="middle" fontSize="22" fill="#a9abad">
      <text x="1477" y="229">N</text>
      <text x="1477" y="341">S</text>
      <text x="1421" y="285">W</text>
      <text x="1533" y="285">E</text>
      <text x="1477" y="282" fontSize="12" fill="#50555b">TOP</text>
    </g>
  </svg>
);

const NavBar = () => (
  <div className="absolute top-[236px] right-1 flex h-[212px] w-8 flex-col items-center rounded-[3px] border border-[#6e7478] bg-[#5d6265] shadow-[0_0_2px_2px_#1a2026]">
    <svg width="30" height="210" viewBox="0 0 30 210" fill="none" stroke="#42474c" strokeWidth="1.200" aria-hidden="true">
      <circle cx="25" cy="5" r="3.500" fill="#45494c" stroke="none" />
      <path d="M23.500 3.500 L26.500 6.500 M26.500 3.500 L23.500 6.500" stroke="#6a6f72" />
      <path d="M15 18.500 H25.500 V29 A10.500 10.500 0 1 1 15 18.500 Z" fill="#5c616a" />
      <circle cx="15" cy="29" r="6" />
      <path d="M8 36 L11 33 M22 36 L19 33" />
      <path d="M12 48 H18 L15 51 Z" fill="#3d4246" stroke="none" />
      <path d="M2 55.500 H28" stroke="#6c7174" />
      <path d="M11 82 L4 73 Q4 70 7 71 L10 74 L8 63 Q9 60 11 63 L12.500 70 L13 61 Q15 58 16 61 L16.500 70 L19 62 Q21 60 21.500 63 L20 71 L23 67 Q26 65 25.500 68 L21 78 L19 82 Z" fill="#5c616a" />
      <path d="M4 89 L18 103 M18 89 L4 103" />
      <path d="M3 93 V88 H8 M14 88 H19 V93 M3 99 V104 H8" />
      <circle cx="19" cy="102" r="5" fill="#666b70" />
      <path d="M22.500 106 L26.500 110" strokeWidth="3" />
      <path d="M12 118 H18 L15 121 Z" fill="#3d4246" stroke="none" />
      <path d="M13 148 V131 H11 L14.500 127 L18 131 H16 V148 Z" />
      <path d="M9 137 Q3 139 5 142 H10 M19 137 Q26 138 25 141 Q24 144 10 144 M10 140 L6 143 L10 146" />
      <path d="M12 156 H18 L15 159 Z" fill="#3d4246" stroke="none" />
      <path d="M2 163.500 H28" stroke="#6c7174" />
      <path d="M3.500 168.500 H9 V174.500 H3.500 Z M12 168.500 H17.500 V174.500 H12 Z M20.500 168.500 H26 V174.500 H20.500 Z M3.500 177.500 H20 V190.500 H3.500 Z" />
      <path d="M9 180 V188 L15 184 Z" fill="#3d4246" />
      <circle cx="25" cy="205" r="3.500" fill="#45494c" stroke="none" />
      <path d="M23 204 H27 M23 206 H27" stroke="#6a6f72" />
    </svg>
  </div>
);

const CommandLine = () => (
  <div className="absolute right-[26px] bottom-px left-[387px] flex h-[27px] overflow-hidden rounded-[3px] border border-[#5f6265]">
    <div className="flex w-[53px] items-center gap-2 bg-gradient-to-b from-[#6a6a6a] to-[#3c3c3c] pl-[3px]">
      <svg width="5" height="17"><path d="M1 0 V17 M4 0 V17" stroke="#9a9a9a" strokeWidth="1.500" strokeDasharray="2 1" /></svg>
      <button aria-label="close command line"><svg width="9" height="9"><path d="M1 1 L8 8 M8 1 L1 8" stroke="#ccc" strokeWidth="2" /></svg></button>
      <button aria-label="customize command line"><svg width="15" height="15"><path d="M5 5 L13 13" stroke="#ccc" strokeWidth="3" strokeLinecap="round" /><path d="M4 0.500 V4 H0.500 Q2 8 6 6.500 Q7.500 3 4 0.500 Z" fill="#ccc" /></svg></button>
    </div>
    <div className="flex flex-1 items-center bg-white/70 pl-[5px]">
      <span className="flex h-[14px] w-[14px] items-center justify-center border border-[#6f767d] bg-[#a3abb2]"><svg width="10" height="8"><path d="M1 1 L4 4 L1 7 M5 7 H9" stroke="#333" fill="none" /></svg></span>
      <span className="ml-1 opacity-60"><Caret w={6} dark /></span>
      <input aria-label="Command" placeholder="Type a command" className="ml-[7px] flex-1 bg-transparent font-[DejaVu_Sans_Mono,monospace] text-[12px] italic outline-none placeholder:text-[#6f7276]" />
      <button aria-label="command history" className="mr-1"><svg width="7" height="4"><path d="M0 4 H7 L3.500 0 Z" fill="#222" /></svg></button>
    </div>
  </div>
);

const Viewport = () => (
  <main className="relative min-w-0 flex-1 overflow-hidden bg-[#212830]">
    <Drawing />
    <div className="absolute top-[6px] left-[3px] text-[11px] text-white">[−] [Top] [2D Wireframe]</div>
    <div className="absolute top-[10px] right-[12px] flex h-[10px] items-end gap-[10px]">
      <button aria-label="minimize view" className="h-[3px] w-[10px] bg-[#eee]" />
      <button aria-label="restore view"><svg width="10" height="10" className="block"><path d="M1 3 H7 V9 H1 Z M3 3 V1 H9 V7 H7" fill="none" stroke="#eee" strokeWidth="1.800" /></svg></button>
      <button aria-label="close view"><svg width="9" height="10" className="block"><path d="M1 1 L8 9 M8 1 L1 9" stroke="#eee" strokeWidth="2.200" /></svg></button>
    </div>
    <button className="absolute top-[193px] right-[59px] flex h-[18px] w-12 items-center justify-between rounded-[4px] border border-[#6d7080] bg-[#9c9eac] px-1 pb-[2px] text-[11px] text-[#4c4e58]">
      WCS<svg width="9" height="6"><path d="M0.500 0.500 H8.500 L4.500 5 Z" fill="none" stroke="#ccc" /></svg>
    </button>
    <NavBar />
    <CommandLine />
  </main>
);

const layers: [string, string, string, string][] = [
  ["0", "white", "#ffffff", "Continuous"],
  ["1", "white", "#ffffff", "Continuous"],
  ["ELET_CAN...", "cyan", "#00ffff", "ELETROC..."],
  ["ELET_ELET...", "white", "#ffffff", "Continuous"],
  ["ELET_INFRA", "magen...", "#ff00ff", "ESPECIFIC..."],
  ["ELET_LUMIN", "white", "#ffffff", "Continuous"],
  ["ELET_TOM...", "92", "#00a500", "Continuous"],
  ["FIACAO", "white", "#ffffff", "Continuous"],
  ["HACHURAS", "252", "#5b5b5b", "Continuous"],
  ["INDICACA...", "white", "#ffffff", "Continuous"],
  ["INDICACA...", "white", "#ffffff", "Continuous"],
  ["INDICACA...", "white", "#ffffff", "Continuous"],
  ["Infraestrut...", "210", "#ff00ff", "Continuous"],
  ["Interruptor", "84", "#1d7b00", "Continuous"],
  ["LINHA07", "8", "#808080", "Continuous"],
  ["LISTAGEM_...", "white", "#ffffff", "Continuous"],
  ["PILARES", "magen...", "#ff00ff", "Continuous"],
  ["SIMBOLOS", "red", "#ff0000", "Continuous"],
  ["teste_lumi...", "white", "#ffffff", "Continuous"],
  ["Tomada", "70", "#7fff00", "Continuous"],
  ["X_CTRL_PT...", "white", "#ffffff", "Continuous"],
];

const RowBulb = () => (
  <svg width="8" height="14" viewBox="0 0 8 14" className="mx-auto block" aria-hidden="true"><path d="M1 3.500 Q1 0.500 4 0.500 Q7 0.500 7 3.500 Q7 5.500 5.500 7 V8 H2.500 V7 Q1 5.500 1 3.500 Z" fill="#fffbd0" /><rect x="3" y="8.500" width="2" height="4" fill="#fff" stroke="#444" strokeWidth="0.400" /></svg>
);

const th = "border-r border-[#474747] bg-[#676767] text-left font-normal whitespace-nowrap overflow-hidden";

const LayerTable = () => (
  <table className="w-full table-fixed border-collapse">
    <colgroup>
      <col className="w-6" /><col className="w-[74px]" /><col className="w-[70px]" /><col className="w-[30px]" /><col className="w-[71px]" /><col className="w-[41px]" /><col />
    </colgroup>
    <thead>
      <tr className="h-[22px]">
        <th className={`${th} pl-1`}>S...</th>
        <th className={`${th} border-r-2 pl-[5px]`}><span className="flex items-center justify-between pr-[3px]">Name<svg width="10" height="5"><path d="M0 5 H10 L5 0 Z" fill="#a2a2a2" /></svg></span></th>
        <th className={`${th} pl-[5px]`}>Color</th>
        <th className={`${th} pl-[5px]`}>On</th>
        <th className={`${th} pl-[5px]`}>Linetype</th>
        <th className={`${th} pl-[5px]`}>Fre...</th>
        <th className={`${th} pl-[5px]`}>L...</th>
      </tr>
    </thead>
    <tbody>
      {layers.map(([name, color, hex, lt], i) => (
        <tr key={i} className={`h-[18px] whitespace-nowrap ${i === 0 ? "bg-[#949494] text-[#111]" : ""}`}>
          <td className="pl-px"><Icon name={i === 0 ? "check" : "sheet"} /></td>
          <td className="border-r-2 border-[#4b4b4b] pl-[3px]">{name}</td>
          <td className="pl-[3px]">
            <span className="flex items-center gap-1"><span className="h-3 w-3 shrink-0 border border-black" style={{ backgroundColor: hex }} />{color}</span>
          </td>
          <td><RowBulb /></td>
          <td className="pl-1">{lt}</td>
          <td><span className="flex justify-center"><Icon name="sun" size={14} /></span></td>
          <td><span className="flex pl-[7px]"><Icon name="unlock" /></span></td>
        </tr>
      ))}
    </tbody>
  </table>
);

const LayerPanel = () => (
  <aside className="flex w-[360px] shrink-0 flex-col bg-[#5b5b5b] pl-[2px] text-[#f2f2f2]">
    <div className="flex h-[22px] shrink-0 items-center gap-[6px] rounded-t-[5px] bg-[#535353] pt-px pl-[5px]">
      <svg width="4" height="10"><path d="M0.500 0 V10 M3.500 0 V10" stroke="#393939" strokeDasharray="1 1" /></svg>
      <h2>LAYER PROPERTIES MANAGER</h2>
    </div>
    <div className="flex h-8 shrink-0 items-center justify-between pl-1">
      <span className="pt-[5px]">Current layer: 0</span>
      <div className="flex h-4 w-[125px] items-center bg-[#666]">
        <input aria-label="Search for layer" placeholder="Search for layer" className="min-w-0 flex-1 outline-none placeholder:text-[#aeaeae]" />
        <button aria-label="search" className="pr-px"><Icon name="search" size={14} /></button>
      </div>
    </div>
    <div className="flex h-[25px] shrink-0 items-center pb-[7px] pl-1">
      <button aria-label="property filter"><Icon name="tbfilter" size={14} /></button>
      <button aria-label="group filter" className="ml-[9px]"><Icon name="tbgroup" size={14} /></button>
      <span className="ml-2 h-[18px] w-px bg-[#3a3a3a]" />
      <button aria-label="layer states" className="ml-[7px]"><Icon name="tbstates" /></button>
      <div className="ml-[13px] flex gap-[7px]">
        {["tbnew", "tbfrz", "tbdel", "tbset"].map((n) => <button key={n} aria-label={n}><Icon name={n} /></button>)}
      </div>
      <button aria-label="refresh" className="ml-auto"><Icon name="refresh" size={12} /></button>
      <button aria-label="settings" className="mr-[10px] ml-[11px]"><Icon name="gear" size={13} /></button>
    </div>
    <div className="flex min-h-0 flex-1">
      <div className="flex w-[21px] flex-col items-center justify-between border border-[#686868] py-[5px] pr-px text-[#ccc]">
        {[0, 1].map((k) => (
          <button key={k} aria-label="expand"><svg width="10" height="9" className="block"><path d="M1 0.500 L5 4.500 L1 8.500 M5 0.500 L9 4.500 L5 8.500" fill="none" stroke="#cfcfcf" strokeWidth="1.400" /></svg></button>
        ))}
      </div>
      <div className="ml-[2px] flex min-w-0 flex-1 flex-col">
        <LayerTable />
        <div className="ml-[96px] flex-1 border-l-2 border-[#4b4b4b]" />
        <div className="flex h-[17px] items-center justify-between bg-[#f0f0f0]">
          <button aria-label="scroll left" className="flex w-[17px] justify-center"><svg width="6" height="9"><path d="M5 0.500 L1 4.500 L5 8.500" fill="none" stroke="#444" strokeWidth="1.800" /></svg></button>
          <span className="mr-auto h-[15px] w-[101px] bg-[#cdcdcd]" />
          <button aria-label="scroll right" className="flex w-[17px] justify-center"><svg width="6" height="9"><path d="M1 0.500 L5 4.500 L1 8.500" fill="none" stroke="#444" strokeWidth="1.800" /></svg></button>
        </div>
      </div>
    </div>
    <div className="flex h-[37px] shrink-0 items-center gap-[9px]">
      <button aria-label="layer filters" className="flex h-[22px] w-[30px] shrink-0 items-center justify-between rounded-[3px] border border-[#d9d9d9] bg-[#4c4c4c] px-[2px]">
        <svg width="16" height="16" className="shrink-0"><path d="M1 5 L6 2 L8 4 L15 1 V9 L12 14 L2 15 Z" fill="#a9c9e2" stroke="#3c5a70" strokeWidth="0.800" /><path d="M14 5 L9 10 H12 L10 14 L15 9 H12.500 Z" fill="#ffd83a" stroke="#a08010" strokeWidth="0.500" /></svg>
        <Caret w={6} dark />
      </button>
      All: 21 layers displayed of 21 total layers
    </div>
  </aside>
);

const LayoutTab = ({ label, active, className }: { label: string; active?: boolean; className: string }) => (
  <div className={`relative -mr-[14px] flex h-[18px] ${active ? "z-10 font-bold text-white" : "text-[#b4b4b4]"} ${className}`}>
    <TabEnd up fill={active ? "#7a7a7a" : "#555555"} />
    <button className={`-mx-1 flex-1 leading-[16px] ${active ? "bg-[#7a7a7a]" : "bg-[#555555]"}`}>{label}</button>
    <TabEnd up flip fill={active ? "#7a7a7a" : "#555555"} />
  </div>
);

const S = ({ children, w = 24 }: { children: React.ReactNode; w?: number }) => (
  <button aria-label="status toggle" className="flex h-full shrink-0 items-center justify-center" style={{ width: w }}>
    <svg width="16" height="16" viewBox="0 0 16 16" fill="none" className="overflow-visible" aria-hidden="true">{children}</svg>
  </button>
);
const box = "flex h-[23px] items-center border border-[#7b7b7b] bg-[#535353] pt-[2px]";
const Drop = () => <span className="flex w-[15px] justify-center"><Caret w={7} /></span>;
const Person = ({ c }: { c: string }) => <path d="M8 0 Q10 2 9.500 6 L14.500 14.500 L11.500 16 L9 12.500 H7 L4.500 16 L1.500 14.500 L6.500 6 Q6 2 8 0 Z" fill={c} />;

const StatusBar = () => (
  <footer className="flex h-[23px] shrink-0 items-start bg-[#383838]">
    <div className="flex pl-[6px]">
      <LayoutTab label="Model" active className="w-[70px]" />
      <LayoutTab label="Layout1" className="w-[79px]" />
      <LayoutTab label="Layout2" className="w-[79px]" />
      <button aria-label="new layout" className="mt-px ml-[11px] flex h-4 w-[22px] items-center justify-center rounded-tl-[8px] rounded-br-[8px] bg-[#555]">
        <svg width="9" height="9"><path d="M4.500 0 V9 M0 4.500 H9" stroke="#c4c4c4" strokeWidth="1.800" /></svg>
      </button>
    </div>
    <div className="ml-auto flex text-[#f4f4f4]">
      <div className={`${box} w-[50px] justify-center text-[12px]`}><button>MODEL</button></div>
      <div className={`${box} w-[66px]`}>
        <S><path d="M0 2.500 H16 M0 6.500 H16 M0 10.500 H16 M0 14.500 H16" stroke="#2a7be0" /><path d="M2.500 0 V16 M6.500 0 V16 M10.500 0 V16 M14.500 0 V16" stroke="#2f93ff" strokeWidth="1.300" /></S>
        <S><path d="M1 1.500 H15 M1 4.500 H15 M1 7.500 H15 M1 10.500 H15 M1 13.500 H15" stroke="#bdbdbd" strokeDasharray="1 2" /></S>
        <Drop />
      </div>
      <div className={`${box} w-[170px]`}>
        <S><path d="M3 3 V14.500 H14 M3 10.500 H7 V14" stroke="#bdbdbd" strokeWidth="1.500" /></S>
        <S><circle cx="7" cy="9" r="5.500" stroke="#2f93ff" strokeWidth="1.700" /><path d="M7 9 H16 M7 9 L12 1" stroke="#2f93ff" strokeWidth="1.500" /></S>
        <Drop />
        <S><path d="M0 0 L16 16 M8 0 V16" stroke="#a8a8a8" strokeWidth="1.300" /></S>
        <Drop />
        <span className="mx-px h-full w-px bg-[#7b7b7b]" />
        <S w={22}><path d="M1 14 L14 2 M1 14.500 H15" stroke="#2f93ff" strokeWidth="1.600" /><circle cx="7" cy="9" r="2" fill="#2f93ff" /></S>
        <S><rect x="1.500" y="3" width="12" height="12" stroke="#2f93ff" strokeWidth="1.600" /><rect x="0" y="0" width="4" height="4" fill="#18c818" stroke="#0a3a0a" /></S>
        <Drop />
      </div>
      <div className={`${box} w-[108px]`}>
        <S><Person c="#2f93ff" /><circle cx="12" cy="3" r="2.500" stroke="#6db3ff" strokeWidth="1.300" /></S>
        <S><Person c="#bdbdbd" /><path d="M13 0 L10 4 H13 L11 8" stroke="#eee" strokeWidth="1.300" /></S>
        <S w={23}><Person c="#bdbdbd" /></S>
        <button className="flex items-center gap-1 pl-[3px]">1:1 <Caret w={7} /></button>
      </div>
      <div className={`${box} w-[41px]`}>
        <S><circle cx="8" cy="8" r="3.500" stroke="#c9c9c9" strokeWidth="3" /><path d="M8 2 V4 M8 12 V14 M2 8 H4 M12 8 H14 M4 4 L5 5 M11 11 L12 12 M12 4 L11 5 M4 12 L5 11" stroke="#c9c9c9" strokeWidth="2" /></S>
        <Drop />
      </div>
      <div className={`${box} w-[25px]`}><S w={22}><path d="M8 1 V15 M1 8 H15" stroke="#d0d0d0" strokeWidth="1.600" /></S></div>
      <div className={`${box} w-[27px]`}><S><rect x="1" y="1" width="8" height="6.500" stroke="#c9c9c9" strokeWidth="1.300" /><circle cx="12.500" cy="7.500" r="2.500" stroke="#c9c9c9" /><path d="M5 9.500 L8 15 H2 Z" stroke="#c9c9c9" /></S></div>
      <div className={`${box} w-[28px]`}><S w={26}><circle cx="8" cy="8" r="7.500" fill="#1c5db0" stroke="#2f93ff" /><path d="M8 8.500 L12 4" stroke="#9fd0ff" strokeWidth="1.400" /></S></div>
      <div className={`${box} w-[51px]`}>
        <S><rect x="0.500" y="2.500" width="15" height="11" stroke="#c9c9c9" strokeWidth="1.300" /><path d="M9 4.500 H13.500 V8 M13 5 L9.500 8 M3 8.500 V11.500 H6.500 M3.500 11 L6.500 8.500" stroke="#e8e8e8" strokeWidth="1.200" /></S>
        <S><path d="M0 3 H16 M0 8 H16 M0 13 H16" stroke="#d0d0d0" strokeWidth="1.800" /></S>
      </div>
    </div>
  </footer>
);

export default function App() {
  return (
    <div className="relative flex h-screen flex-col overflow-hidden bg-[#383838] font-['Open_Sans','Noto_Sans',sans-serif] text-[11px] leading-[15px]">
      <TitleBar />
      <RibbonTabs />
      <Ribbon />
      <FileTabs />
      <div className="h-1 shrink-0 bg-[#5d5d5d]" />
      <div className="flex min-h-0 flex-1">
        <Viewport />
        <LayerPanel />
      </div>
      <StatusBar />
      <button aria-label="application menu" className="absolute top-0 left-0 flex h-[39px] w-[41px] items-start gap-[2px] border border-[#222] bg-gradient-to-b from-[#8a8a8a] to-[#555] pl-[3px]">
        <svg width="26" height="27" viewBox="0 0 26 27" aria-hidden="true">
          <path d="M1 26 L10 0 H17 L25 24 L20 26 L17 19 L8 20 L6 26 Z M9.500 15 L15.500 14.500 L13.500 6 Z" fill="#c9302c" fillRule="evenodd" />
          <path d="M1 26 L10 0 H13 L5 26 Z" fill="#e2574f" />
          <path d="M17 0 L25 24 L22 25 L14 3 Z" fill="#93201d" />
          <path d="M8 20 L17 19 L16 16 L9 17 Z" fill="#e98a84" />
        </svg>
        <span className="pt-[16px]"><Caret dark w={8} /></span>
      </button>
    </div>
  );
}
